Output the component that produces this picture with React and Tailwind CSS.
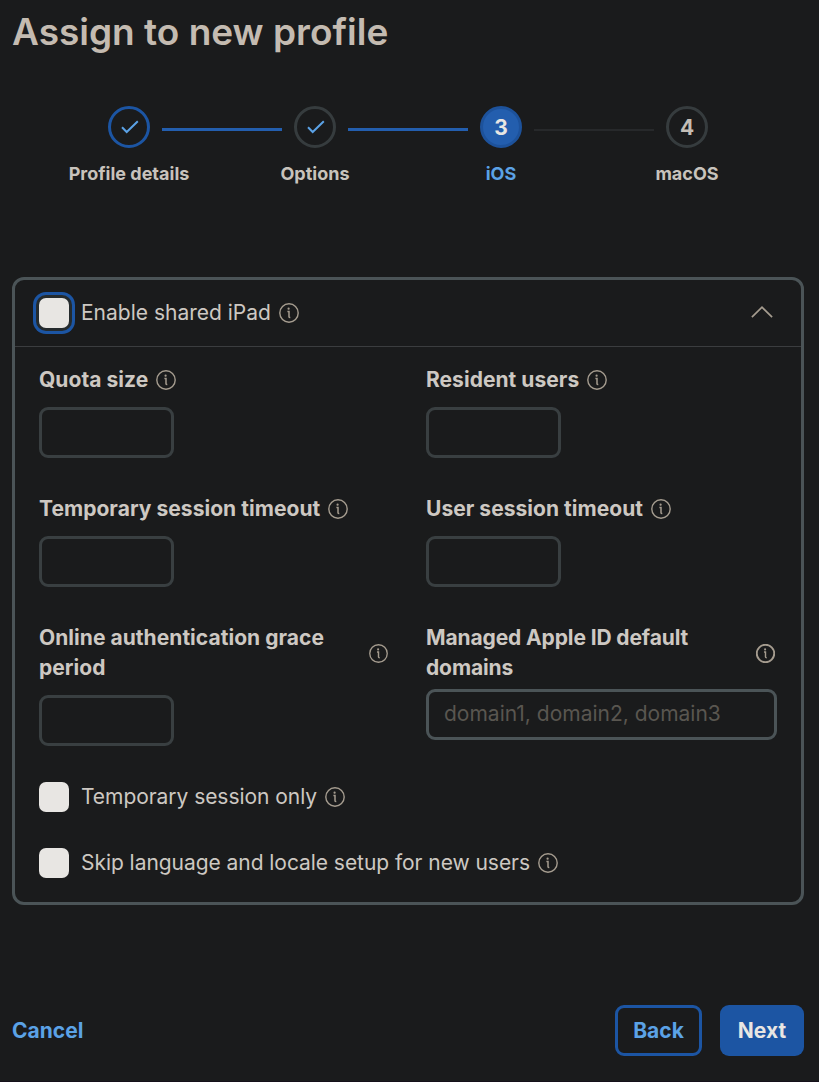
import clsx from 'clsx'

const steps = [
  { label: 'Profile details', state: 'visited' },
  { label: 'Options', state: 'done' },
  { label: 'iOS', state: 'current' },
  { label: 'macOS', state: 'todo' },
]

const fields = [
  { label: 'Quota size' },
  { label: 'Resident users' },
  { label: 'Temporary session timeout' },
  { label: 'User session timeout' },
  { label: 'Online authentication grace period', wide: true },
  { label: 'Managed Apple ID default domains', wide: true, placeholder: 'domain1, domain2, domain3' },
]

const circleStyles = {
  visited: 'border-[#1c55a3]',
  done: 'border-[#363c3e]',
  current: 'border-[#1d529b] bg-[#235eae] text-[#e8e6e3]',
  todo: 'border-[#363c3e] text-[#c4beb6]',
}

function InfoIcon({ className = 'size-5', stroke = 1.4 }) {
  return (
    <svg viewBox="0 0 20 20" fill="none" stroke="#a59c8f" strokeWidth={stroke} className={clsx('shrink-0', className)}>
      <circle cx="10" cy="10" r="9.2" />
      <path d="M8.4 8.5h1.6v5.2q0 .8 1.3.8" strokeWidth="1.5" />
      <circle cx="9.6" cy="5.7" r="1.1" fill="#a59c8f" stroke="none" />
    </svg>
  )
}

function Check() {
  return (
    <svg viewBox="0 0 18 14" fill="none" stroke="#5ba2e6" strokeWidth="2" className="w-[18px] h-[14px] ml-0.5">
      <path d="M1 7.2 5.7 12 16.8 1.2" />
    </svg>
  )
}

function Stepper() {
  return (
    <div className="mt-12">
      <div className="flex items-center pl-24">
        {steps.map((s, i) => (
          <div key={s.label} className="flex items-center">
            <div className={clsx('size-[42px] rounded-full border-3 flex items-center justify-center text-[21px] leading-none font-bold', circleStyles[s.state])}>
              {s.state === 'visited' || s.state === 'done' ? <Check /> : i + 1}
            </div>
            {i < 2 && <div className="w-[120px] h-[3px] mx-3 mt-[5px] bg-[#235eae]" />}
            {i === 2 && <div className="w-[120px] h-[2px] mx-3 mt-[6px] bg-[#27292b]" />}
          </div>
        ))}
      </div>
      <div className="flex pl-6 mt-3">
        {steps.map(s => (
          <div
            key={s.label}
            className={clsx('w-[186px] text-center text-[18px] leading-7 font-bold', s.state === 'current' ? 'text-[#5ba2e6]' : 'text-[#c8c3bc]')}
          >
            {s.label}
          </div>
        ))}
      </div>
    </div>
  )
}

function Field({ label, wide, placeholder }) {
  return (
    <div>
      <div className="flex items-center gap-2">
        <div className={clsx('font-bold', wide && 'w-[323px] pr-4', placeholder ? 'tracking-[-0.12px]' : 'tracking-[0.04px]')}>{label}</div>
        <InfoIcon className={wide ? 'size-[19px] -ml-px' : 'size-5'} stroke={placeholder ? 2 : 1.4} />
      </div>
      {placeholder ? (
        <input
          placeholder={placeholder}
          className="block mt-1.5 w-full h-[51px] px-[15px] pb-0.5 rounded-[9px] border-3 border-[#4b5457] bg-transparent placeholder:text-[#595650]"
        />
      ) : (
        <input className="block mt-3 w-[135px] h-[51px] rounded-[9px] border-3 border-[#393f41] bg-transparent" />
      )}
    </div>
  )
}

function CheckboxRow({ label, focused, className }) {
  return (
    <div className={clsx('flex items-center', className)}>
      <div className={clsx('size-[30px] rounded-[7px] bg-[#e8e6e3] mr-3 shrink-0', focused && 'shadow-[0_0_0_3px_#252b2d,0_0_0_6px_#1c55a3]')} />
      <span className={clsx('mr-2', !focused && 'tracking-[-0.05px]')}>{label}</span>
      <InfoIcon />
    </div>
  )
}

export default function App() {
  return (
    <div className="min-h-[1082px] bg-[#1a1b1c] pl-3 pr-[15px] font-['Inter',sans-serif] text-[21px] leading-[30px] text-[#cdc8c2] border-b border-[#15101a]">
      <h1 className="pt-1.5 text-[37px] leading-[52px] font-semibold text-[#c4bbb1]">Assign to new profile</h1>

      <Stepper />

      <div className="mt-[89px] h-[628px] border-3 border-[#4b5457] rounded-xl">
        <div className="flex items-center justify-between h-[67px] pl-6 pr-7 border-b border-[#3b3d3f]">
          <CheckboxRow label="Enable shared iPad" focused />
          <svg viewBox="0 0 22 12" fill="none" stroke="#a59c8f" strokeWidth="1.7" className="w-[22px] h-3 mb-0.5">
            <path d="M.9 11.2 11 1.2l10.1 10" />
          </svg>
        </div>

        <div className="pt-[18px] px-6">
          <div className="grid grid-cols-2 gap-9">
            {fields.map(f => (
              <Field key={f.label} {...f} />
            ))}
          </div>
          <CheckboxRow label="Temporary session only" className="mt-9" />
          <CheckboxRow label="Skip language and locale setup for new users" className="mt-9" />
        </div>
      </div>

      <div className="mt-[100px] flex items-center justify-between font-bold">
        <button className="text-[#5ba2e6]">Cancel</button>
        <div className="flex gap-[18px]">
          <button className="w-[87px] h-[51px] rounded-[9px] border-3 border-[#1c55a3] text-[#5ba2e6]">Back</button>
          <button className="w-[84px] h-[51px] rounded-[9px] bg-[#1c55a3] text-[#e8e6e3]">Next</button>
        </div>
      </div>
    </div>
  )
}
